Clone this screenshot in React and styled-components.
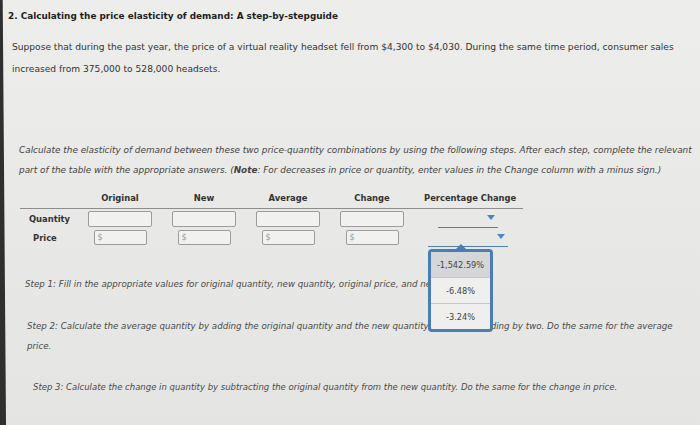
import React from "react";
import styled, { createGlobalStyle } from "styled-components";

const GlobalStyle = createGlobalStyle`
  html, body {
    margin: 0;
    padding: 0;
  }
  body {
    width: 700px;
    height: 425px;
    overflow: hidden;
    background: #e8e8e6;
    font-family: "DejaVu Sans", Verdana, sans-serif;
  }
`;

const Page = styled.div`
  position: relative;
  width: 700px;
  height: 425px;
  box-sizing: border-box;
  padding-top: 10px;
  background: linear-gradient(180deg, #ededeb 0%, #e8e8e6 55%, #e4e4e2 100%);
  overflow: hidden;

  &::before {
    content: "";
    position: absolute;
    left: 0;
    top: 0;
    bottom: 0;
    width: 6px;
    background: #2f2f2f;
    clip-path: polygon(0 0, 45% 0, 100% 100%, 0 100%);
  }
`;

const Title = styled.h2`
  margin: 0 0 0 8px;
  font-size: 8.9px;
  line-height: 12px;
  font-weight: bold;
  color: #1f1f1f;
  white-space: nowrap;
`;

const Para = styled.p`
  margin: ${(p) => p.$top}px 0 0 ${(p) => p.$indent}px;
  font-size: ${(p) => p.$size || 8.4}px;
  line-height: ${(p) => p.$lh || 20}px;
  color: ${(p) => p.$color || "#333"};
  font-style: ${(p) => (p.$italic ? "italic" : "normal")};
  white-space: nowrap;
`;

const Table = styled.div`
  margin: 8px 0 0 20px;
  width: 503px;
`;

const Row = styled.div`
  display: grid;
  grid-template-columns: 68px repeat(4, 84px) 100px;
  align-items: center;
  height: ${(p) => p.$h}px;
  border-bottom: ${(p) => (p.$rule ? "1px solid #8d8d8d" : "none")};
`;

const HeadCell = styled.div`
  font-size: 8.4px;
  font-weight: bold;
  color: #333;
  text-align: ${(p) => (p.$left ? "left" : "center")};
  padding-right: ${(p) => (p.$left ? 0 : 20)}px;
  white-space: nowrap;
`;

const Label = styled.div`
  font-size: 8.4px;
  font-weight: bold;
  color: #333;
  padding-left: ${(p) => p.$indent}px;
`;

const Cell = styled.div`
  position: relative;
  display: flex;
  justify-content: center;
  padding-right: ${(p) => p.$pr}px;
`;

const Box = styled.div`
  box-sizing: border-box;
  width: ${(p) => p.$w}px;
  height: ${(p) => p.$h}px;
  border: 1px solid #9c9c9c;
  border-radius: 2px;
  background: #f1f1f0;
  font-size: 8px;
  line-height: ${(p) => p.$h - 2}px;
  color: #9a9a9a;
  padding-left: 3px;
`;

const Select = styled.div`
  position: relative;
  width: ${(p) => p.$w}px;
  height: 14px;
  border-bottom: 1.5px solid #4f7fae;
  margin-top: 4px;

  &::after {
    content: "";
    position: absolute;
    right: 3px;
    top: 2px;
    border-left: 4.5px solid transparent;
    border-right: 4.5px solid transparent;
    border-top: 5px solid #4f86c0;
  }
`;

const Popup = styled.div`
  position: absolute;
  left: 4px;
  top: 21px;
  z-index: 3;
  width: 65px;
  box-sizing: border-box;
  border: 3px solid #4a7db5;
  border-radius: 4px;
  background: #efefee;

  &::before {
    content: "";
    position: absolute;
    left: 24px;
    top: -8px;
    border-left: 6px solid transparent;
    border-right: 6px solid transparent;
    border-bottom: 6px solid #4a7db5;
  }
`;

const Option = styled.div`
  height: 25px;
  display: flex;
  align-items: center;
  justify-content: center;
  font-size: 8.2px;
  color: #444;
  background: ${(p) => (p.$active ? "#d5d6d8" : "transparent")};
  border-top: ${(p) => (p.$first ? "none" : "1px solid #c8c8c8")};
`;

const options = ["-1,542.59%", "-6.48%", "-3.24%"];

export default function App() {
  return (
    <Page>
      <GlobalStyle />
      <Title>2. Calculating the price elasticity of demand: A step-by-stepguide</Title>

      <Para $top={14} $indent={12} $lh={22} $size={9.1}>
        Suppose that during the past year, the price of a virtual reality headset fell from $4,300 to $4,030. During the same time period, consumer sales
        <br />
        increased from 375,000 to 528,000 headsets.
      </Para>

      <Para $top={60} $indent={19} $italic $color="#444" $size={8.9}>
        Calculate the elasticity of demand between these two price-quantity combinations by using the following steps. After each step, complete the relevant
        <br />
        part of the table with the appropriate answers. (<b>Note</b>: For decreases in price or quantity, enter values in the Change column with a minus sign.)
      </Para>

      <Table>
        <Row $h={20} $rule>
          <div />
          <HeadCell>Original</HeadCell>
          <HeadCell>New</HeadCell>
          <HeadCell>Average</HeadCell>
          <HeadCell>Change</HeadCell>
          <HeadCell $left>Percentage Change</HeadCell>
        </Row>
        <Row $h={19}>
          <Label $indent={9}>Quantity</Label>
          {[0, 1, 2, 3].map((i) => (
            <Cell key={i} $pr={20}>
              <Box $w={64} $h={16} />
            </Cell>
          ))}
          <Cell $pr={12}>
            <Select $w={60} />
          </Cell>
        </Row>
        <Row $h={19}>
          <Label $indent={13}>Price</Label>
          {[0, 1, 2, 3].map((i) => (
            <Cell key={i} $pr={20}>
              <Box $w={53} $h={15}>$</Box>
            </Cell>
          ))}
          <Cell $pr={12}>
            <Select $w={80} />
            <Popup>
              {options.map((o, i) => (
                <Option key={o} $active={i === 0} $first={i === 0}>
                  {o}
                </Option>
              ))}
            </Popup>
          </Cell>
        </Row>
      </Table>

      <Para $top={27} $indent={25} $color="#4a4a4a" $size={8.7}>
        <i>Step 1: Fill in the appropriate values for original quantity, new quantity, original price, and new price.</i>
      </Para>

      <Para $top={22} $indent={27} $color="#4a4a4a" $size={8.7}>
        <i>
          Step 2: Calculate the average quantity by adding the original quantity and the new quantity, and then dividing by two. Do the same for the average
          <br />
          price.
        </i>
      </Para>

      <Para $top={21} $indent={33} $color="#4a4a4a" $size={8.5}>
        <i>Step 3: Calculate the change in quantity by subtracting the original quantity from the new quantity. Do the same for the change in price.</i>
      </Para>
    </Page>
  );
}
